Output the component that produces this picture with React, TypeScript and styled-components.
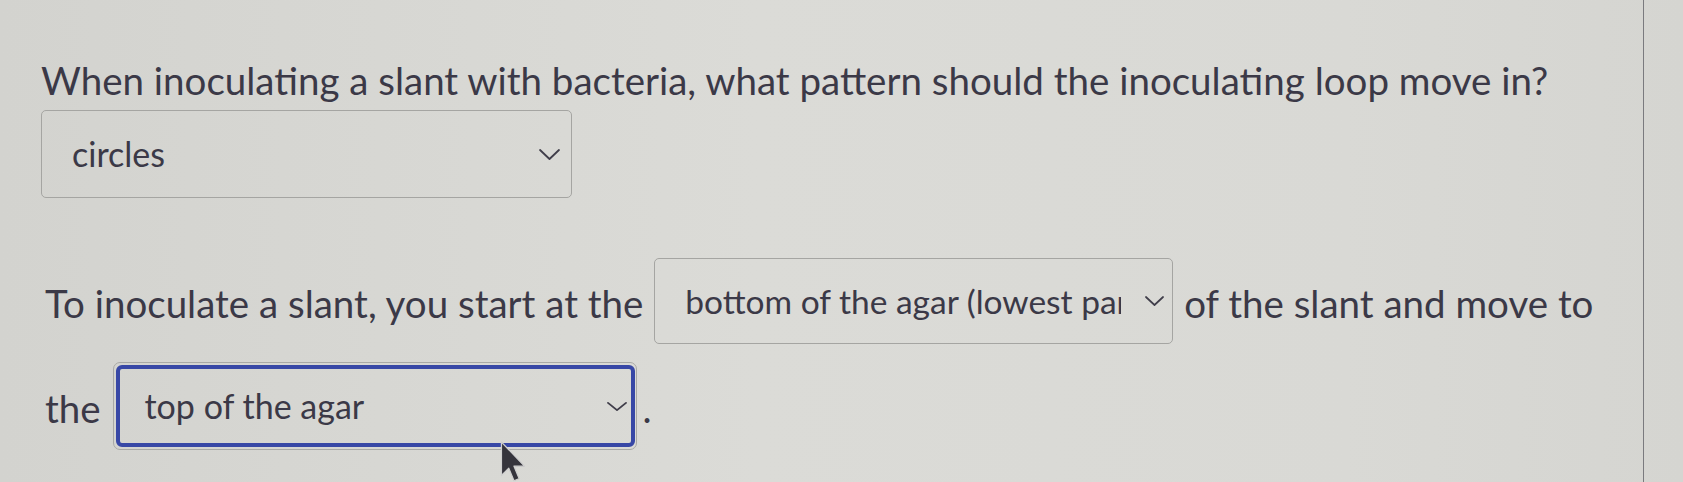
import React from "react";
import styled, { createGlobalStyle } from "styled-components";

const Global = createGlobalStyle`
  html, body { margin: 0; padding: 0; }
  body {
    background: #d8d8d4;
    font-family: Lato, "Noto Sans", sans-serif;
    color: #3b3947;
    overflow: hidden;
  }
`;

const Page = styled.div`
  position: relative;
  width: 1683px;
  height: 482px;
  overflow: hidden;
  background: linear-gradient(90deg, #d3d3cf 0%, #dbdbd7 45%, #d9d9d5 80%, #d5d5d1 100%);
`;

const Panel = styled.main`
  box-sizing: border-box;
  width: 1644px;
  height: 100%;
  border-right: 1.5px solid #7a7a7e;
  padding: 57px 30px 0 41px;
`;

const Question = styled.h2`
  margin: 0;
  font-size: 38.5px;
  font-weight: 400;
  line-height: 46px;
  color: #3b3947;
`;

const Block = styled.div`
  margin-top: 7px;
`;

const Paragraph = styled.p`
  margin: 53px 0 0 4px;
  font-size: 38.5px;
  line-height: 105px;
  color: #3b3947;
`;

const Words = styled.span`
  white-space: nowrap;
`;

const SelectBox = styled.div<{ $w: number; $h: number; $pr: number; $focused?: boolean }>`
  display: inline-flex;
  align-items: center;
  box-sizing: border-box;
  width: ${(p) => p.$w}px;
  height: ${(p) => p.$h}px;
  border: ${(p) => (p.$focused ? "4px solid #3848a6" : "1.5px solid #a5a5a2")};
  border-radius: ${(p) => (p.$focused ? 6 : 5)}px;
  padding: 0 ${(p) => p.$pr}px 0 ${(p) => (p.$focused ? 24 : 30)}px;
  line-height: 1.2;
`;

const InlineSelect = styled.span<{ $ml?: number; $mr?: number }>`
  display: inline-flex;
  vertical-align: 4px;
  margin: 0 ${(p) => p.$mr ?? 1}px 0 ${(p) => p.$ml ?? 1}px;
`;

const FocusRing = styled.span`
  display: inline-flex;
  padding: 2px 1px 2px 2px;
  border: 1px solid #a9a9a6;
  border-radius: 7px;
`;

const SelectText = styled.span<{ $size: number }>`
  flex: 1;
  min-width: 0;
  overflow: hidden;
  white-space: nowrap;
  font-size: ${(p) => p.$size}px;
  color: #3b3947;
`;

const ChevronSvg = styled.svg`
  flex: none;
  margin-left: 24px;
`;

const Cursor = styled.svg`
  position: absolute;
  left: 498px;
  top: 440px;
`;

function Chevron({ w, h }: { w: number; h: number }) {
  return (
    <ChevronSvg width={w} height={h} viewBox="0 0 20 10" preserveAspectRatio="none">
      <polyline points="1,1 10,9 19,1" fill="none" stroke="#403e4a" strokeWidth="1.8" strokeLinecap="round" strokeLinejoin="round" />
    </ChevronSvg>
  );
}

export default function App() {
  return (
    <Page>
      <Global />
      <Panel>
        <Question>
          When inoculating a slant with bacteria, what pattern should the inoculating loop move in?
        </Question>
        <Block>
          <SelectBox $w={531} $h={88} $pr={11}>
            <SelectText $size={34}>circles</SelectText>
            <Chevron w={21} h={11} />
          </SelectBox>
        </Block>
        <Paragraph>
          <Words>To inoculate a slant, you start at the</Words>{" "}
          <InlineSelect>
            <SelectBox $w={519} $h={86} $pr={8}>
              <SelectText $size={33.5}>bottom of the agar (lowest part)</SelectText>
              <Chevron w={19} h={10} />
            </SelectBox>
          </InlineSelect>{" "}
          <Words>of the slant and move to</Words>{" "}
          <Words>the</Words>{" "}
          <InlineSelect $ml={3} $mr={5}>
            <FocusRing>
              <SelectBox $w={519} $h={82} $pr={4} $focused>
                <SelectText $size={34}>top of the agar</SelectText>
                <Chevron w={20} h={9} />
              </SelectBox>
            </FocusRing>
          </InlineSelect>
          <Words>.</Words>
        </Paragraph>
      </Panel>
      <Cursor width="32" height="46" viewBox="0 0 30 44">
        <path d="M3,2 L3,34 L10,27 L15,39 L20,37 L15,25 L25,25 Z" fill="#35343c" stroke="#cfcfcf" strokeWidth="1.2" strokeLinejoin="round" />
      </Cursor>
    </Page>
  );
}
